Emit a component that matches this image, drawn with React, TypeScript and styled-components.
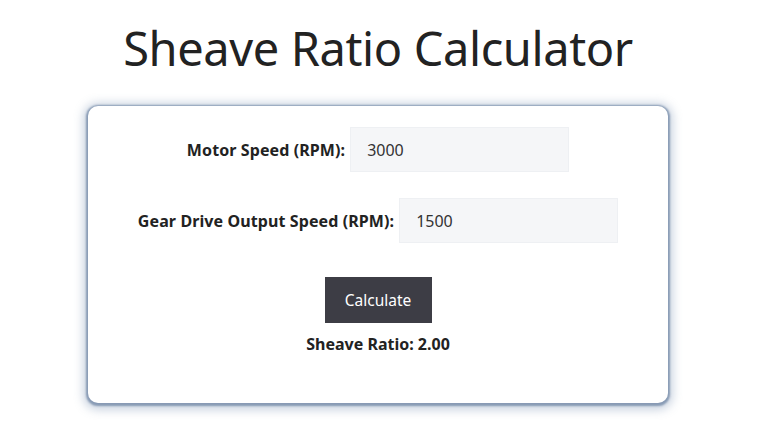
import { useState } from 'react'
import styled, { createGlobalStyle } from 'styled-components'

const GlobalStyle = createGlobalStyle`
  body {
    margin: 0;
    background: #ffffff;
    font-family: "Noto Sans", "Open Sans", sans-serif;
    color: #212529;
  }
`

export default function App() {
  const [motor, setMotor] = useState('3000')
  const [output, setOutput] = useState('1500')
  const [ratio, setRatio] = useState('2.00')

  const handleCalculate = () => {
    const m = parseFloat(motor)
    const o = parseFloat(output)
    if (!m || !o) return
    setRatio((m / o).toFixed(2))
  }

  return (
    <Page>
      <GlobalStyle />
      <Title>Sheave Ratio Calculator</Title>
      <Card>
        <Field>
          <Label htmlFor="motor">Motor Speed (RPM):</Label>
          <Input id="motor" value={motor} onChange={e => setMotor(e.target.value)} />
        </Field>
        <Field>
          <Label htmlFor="output">Gear Drive Output Speed (RPM):</Label>
          <Input id="output" value={output} onChange={e => setOutput(e.target.value)} />
        </Field>
        <CalcButton onClick={handleCalculate}>Calculate</CalcButton>
        <Result>Sheave Ratio: {ratio}</Result>
      </Card>
    </Page>
  )
}

const Page = styled.div`
  display: flex;
  flex-direction: column;
  align-items: center;
  padding: 18px 12px 30px 0;
`

const Title = styled.h1`
  margin: 0;
  font-size: 47px;
  font-weight: 400;
  line-height: 60px;
  color: #222;
  letter-spacing: -0.4px;
`

const Card = styled.div`
  margin-top: 28px;
  width: 580px;
  box-sizing: border-box;
  padding: 21px 20px 48px;
  background: #fff;
  border-radius: 10px;
  box-shadow: 0 1px 2px 2px rgba(128, 148, 175, 0.9), 0 2px 10px 5px rgba(140, 160, 188, 0.45);
  display: flex;
  flex-direction: column;
  align-items: center;
`

const Field = styled.div`
  display: flex;
  align-items: center;
  gap: 5px;
  margin-bottom: 26px;
`

const Label = styled.label`
  font-size: 16px;
  font-weight: 700;
  color: #222;
  letter-spacing: 0.1px;
`

const Input = styled.input`
  width: 219px;
  height: 45px;
  box-sizing: border-box;
  padding: 0 16px;
  border: 1px solid #eef0f3;
  background: #f5f6f8;
  font-family: inherit;
  font-size: 16px;
  color: #333;
  outline: none;
`

const CalcButton = styled.button`
  margin-top: 8px;
  width: 107px;
  height: 46px;
  border: none;
  background: #3d3d45;
  color: #fff;
  font-family: inherit;
  font-size: 15.5px;
  cursor: pointer;
`

const Result = styled.div`
  margin-top: 10px;
  font-size: 16px;
  font-weight: 700;
  color: #222;
`
